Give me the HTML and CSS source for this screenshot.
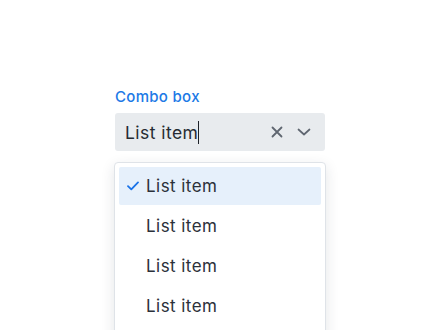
FILE: index.html
```html
<!DOCTYPE html>
<html>
<head>
<meta charset="utf-8">
<link rel="stylesheet" href="styles.css">
</head>
<body>
<div class="combo">
  <label class="label">Combo box</label>
  <div class="field">
    <span class="value">List item</span><span class="caret"></span>
    <span class="spacer"></span>
    <svg class="icon-x" width="12" height="12" viewBox="0 0 12 12"><path d="M1.5 1.5 L10.5 10.5 M10.5 1.5 L1.5 10.5" stroke="#5f6670" stroke-width="1.8" stroke-linecap="round" fill="none"/></svg>
    <svg class="icon-chev" width="14" height="8" viewBox="0 0 14 8"><path d="M1.5 1.5 L7 6.5 L12.5 1.5" stroke="#5f6670" stroke-width="1.7" stroke-linecap="round" stroke-linejoin="round" fill="none"/></svg>
  </div>
  <ul class="menu">
    <li class="item selected"><svg class="check" width="12" height="10" viewBox="0 0 12 10"><path d="M1 5.2 L4.3 8.4 L11 1.4" stroke="#1a73e8" stroke-width="1.8" fill="none" stroke-linecap="round" stroke-linejoin="round"/></svg><span>List item</span></li>
    <li class="item"><span>List item</span></li>
    <li class="item"><span>List item</span></li>
    <li class="item"><span>List item</span></li>
  </ul>
</div>
</body>
</html>
```
FILE: styles.css
```css
html, body { margin: 0; padding: 0; background: #fff; overflow: hidden; }
body {
  font-family: Inter, "Noto Sans", sans-serif;
  width: 440px; height: 330px;
}
.combo {
  margin-left: 115px;
  padding-top: 87px;
  width: 210px;
}
.label {
  display: block;
  color: #2079e6;
  font-size: 15px;
  font-weight: 500;
  line-height: 20px;
  letter-spacing: 0.3px;
  margin-bottom: 6px;
}
.field {
  display: flex;
  align-items: center;
  height: 38px;
  background: #e8ebee;
  border-radius: 3px;
  padding: 0 14px 0 10px;
  box-sizing: border-box;
  color: #262b33;
  font-size: 17.5px;
  letter-spacing: 0.45px;
}
.caret {
  display: inline-block;
  width: 1px;
  height: 23px;
  background: #1e2228;
  margin-left: 0;
}
.spacer { flex: 1; }
.icon-x { margin-right: 14px; }
.menu {
  list-style: none;
  margin: 11px 0 0 -1px;
  padding: 4px 4px;
  width: 212px;
  box-sizing: border-box;
  background: #fff;
  border: 1px solid #dfe3e8;
  border-radius: 4px;
  box-shadow: 0 4px 14px rgba(30, 40, 60, 0.12);
  height: 180px;
}
.item {
  display: flex;
  align-items: center;
  height: 38px;
  margin-bottom: 2px;
  padding-left: 27px;
  position: relative;
  font-size: 17px;
  letter-spacing: 0.45px;
  color: #2b3039;
  border-radius: 2px;
}
.item.selected { background: #e6f0fb; }
.check { position: absolute; left: 8px; top: 14px; }
```
